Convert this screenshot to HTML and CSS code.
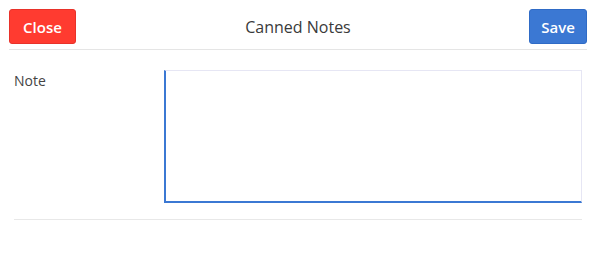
FILE: index.html
```html
<!DOCTYPE html>
<html lang="en">
<head>
    <meta charset="UTF-8">
    <meta name="viewport" content="width=device-width, initial-scale=1.0">
    <title>Canned Notes</title>
    <link rel="stylesheet" href="styles.css">
</head>
<body>
    <div class="modal">
        <div class="modal-header">
            <div class="header-left">
                <button class="btn btn-close">Close</button>
            </div>
            <h3 class="modal-title">Canned Notes</h3>
            <div class="header-right">
                <button class="btn btn-save">Save</button>
            </div>
        </div>

        <div class="modal-body">
            <div class="form-row">
                <label for="note">Note</label>
                <textarea id="note"></textarea>
            </div>
        </div>
    </div>
</body>
</html>
```

FILE: styles.css
```css
body {
    margin: 0;
    font-family: "Open Sans", "Noto Sans", sans-serif;
    background: #ffffff;
    color: #333333;
}
.modal {
    width: 597px;
    height: 269px;
}
.modal-header {
    display: grid;
    grid-template-columns: 1fr auto 1fr;
    align-items: center;
    margin: 0 10px 0 9px;
    padding: 9px 0 5px;
    border-bottom: 1px solid #e5e5e5;
}
.header-left { display: flex; justify-content: flex-start; }
.header-right { display: flex; justify-content: flex-end; }
.modal-title {
    margin: 0;
    font-size: 16px;
    font-weight: normal;
    color: #3a3a3a;
}
.btn {
    height: 35px;
    border: 1px solid transparent;
    border-radius: 3px;
    color: #ffffff;
    font-family: inherit;
    font-size: 15px;
    font-weight: 600;
    padding: 0;
    cursor: pointer;
}
.btn-close {
    width: 67px;
    background-color: #ff3b30;
    border-color: #e8322a;
}
.btn-save {
    width: 58px;
    background-color: #3b78d3;
    border-color: #2f6bc6;
}
.modal-body {
    margin: 0 15px 0 14px;
    padding: 20px 0 16px;
    border-bottom: 1px solid #e8e8e8;
}
.form-row {
    display: flex;
}
.form-row label {
    width: 150px;
    font-size: 14px;
    padding-top: 1px;
    color: #444444;
}
.form-row textarea {
    width: 418px;
    height: 133px;
    box-sizing: border-box;
    margin: 0;
    padding: 6px;
    border: 1px solid #e6e6f4;
    border-left: 2px solid #3b78d3;
    border-bottom: 2px solid #3b78d3;
    border-radius: 0;
    resize: none;
    outline: none;
    font-family: inherit;
}
```
